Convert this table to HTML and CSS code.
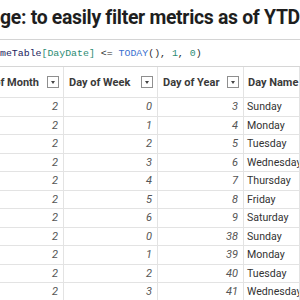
FILE: index.html
```html
<!DOCTYPE html>
<html>
<head>
<meta charset="utf-8">
<link rel="stylesheet" href="styles.css">
</head>
<body>
<div class="page">
  <h1 class="title">ge: to easily filter metrics as of YTD</h1>
  <div class="formula"><span class="tbl">meTable</span><span class="col">[DayDate]</span> <span class="op">&lt;=</span> <span class="fn">TODAY</span><span class="op">(),</span> <span class="num">1</span><span class="op">,</span> <span class="num">0</span><span class="op">)</span></div>
  <div class="grid">
    <div class="hd c1"><span>Day of Month</span><i class="dd"></i></div>
    <div class="hd"><span>Day of Week</span><i class="dd"></i></div>
    <div class="hd"><span>Day of Year</span><i class="dd"></i></div>
    <div class="hd last"><span>Day Name</span></div>

    <div class="n">2</div><div class="n">0</div><div class="n">3</div><div class="t">Sunday</div>
    <div class="n">2</div><div class="n">1</div><div class="n">4</div><div class="t">Monday</div>
    <div class="n">2</div><div class="n">2</div><div class="n">5</div><div class="t">Tuesday</div>
    <div class="n">2</div><div class="n">3</div><div class="n">6</div><div class="t">Wednesday</div>
    <div class="n">2</div><div class="n">4</div><div class="n">7</div><div class="t">Thursday</div>
    <div class="n">2</div><div class="n">5</div><div class="n">8</div><div class="t">Friday</div>
    <div class="n">2</div><div class="n">6</div><div class="n">9</div><div class="t">Saturday</div>
    <div class="n">2</div><div class="n">0</div><div class="n">38</div><div class="t">Sunday</div>
    <div class="n">2</div><div class="n">1</div><div class="n">39</div><div class="t">Monday</div>
    <div class="n">2</div><div class="n">2</div><div class="n">40</div><div class="t">Tuesday</div>
    <div class="n">2</div><div class="n">3</div><div class="n">41</div><div class="t">Wednesday</div>
  </div>
</div>
</body>
</html>
```
FILE: styles.css
```css
html, body {
  margin: 0;
  padding: 0;
  background: #ffffff;
}
body {
  width: 300px;
  height: 300px;
  overflow: hidden;
}
.page {
  width: 300px;
  overflow: hidden;
}
.title {
  margin: 0;
  height: 39px;
  padding-top: 4px;
  box-sizing: border-box;
  font-family: Roboto, "Noto Sans", sans-serif;
  font-weight: 700;
  font-size: 19.4px;
  line-height: 27px;
  letter-spacing: -0.3px;
  color: #1e1e1e;
  white-space: nowrap;
}
.formula {
  border-top: 1px solid #d4d4d4;
  height: 27px;
  box-sizing: border-box;
  padding-top: 7px;
  font-family: "Liberation Mono", "DejaVu Sans Mono", monospace;
  font-size: 9.9px;
  line-height: 14px;
  white-space: pre;
  color: #2b2b2b;
}
.formula .tbl { color: #23235e; }
.formula .col { color: #2d8c74; }
.formula .fn { color: #3a6fd0; }
.formula .num { color: #2d8c74; }
.formula .op { color: #2b2b2b; }

.grid {
  display: grid;
  grid-template-columns: 100px 94px 86px 1fr;
  grid-template-rows: 31px;
  grid-auto-rows: 18.5px;
  margin-left: -36px;
  width: 336px;
  border-top: 1px solid #d6d6d6;
  font-family: Roboto, "Noto Sans", sans-serif;
}
.grid > div {
  box-sizing: border-box;
  border-bottom: 1px solid #e3e3e3;
  border-right: 1px solid #e3e3e3;
  white-space: nowrap;
  overflow: hidden;
}
.hd {
  display: flex;
  align-items: center;
  padding: 0 4px 0 5px;
  font-size: 11px;
  font-weight: 700;
  color: #3a3a3a;
}
.hd.last { padding-left: 4px; }
.hd.c1 { justify-content: flex-end; }
.hd span { flex: 0 0 auto; }
.hd .dd {
  margin-left: auto;
  width: 12px;
  height: 12px;
  border: 1px solid #8f8f8f;
  box-sizing: border-box;
  display: flex;
  align-items: center;
  justify-content: center;
  flex: 0 0 auto;
}
.hd.c1 .dd { margin-left: 8px; }
.hd .dd::after {
  content: "";
  border-left: 2.5px solid transparent;
  border-right: 2.5px solid transparent;
  border-top: 3px solid #444;
}
.n {
  text-align: right;
  padding-right: 5px;
  font-size: 11px;
  font-style: italic;
  line-height: 18px;
  color: #555555;
}
.t {
  padding-left: 3px;
  font-size: 10.6px;
  line-height: 18px;
  color: #333333;
}
```
